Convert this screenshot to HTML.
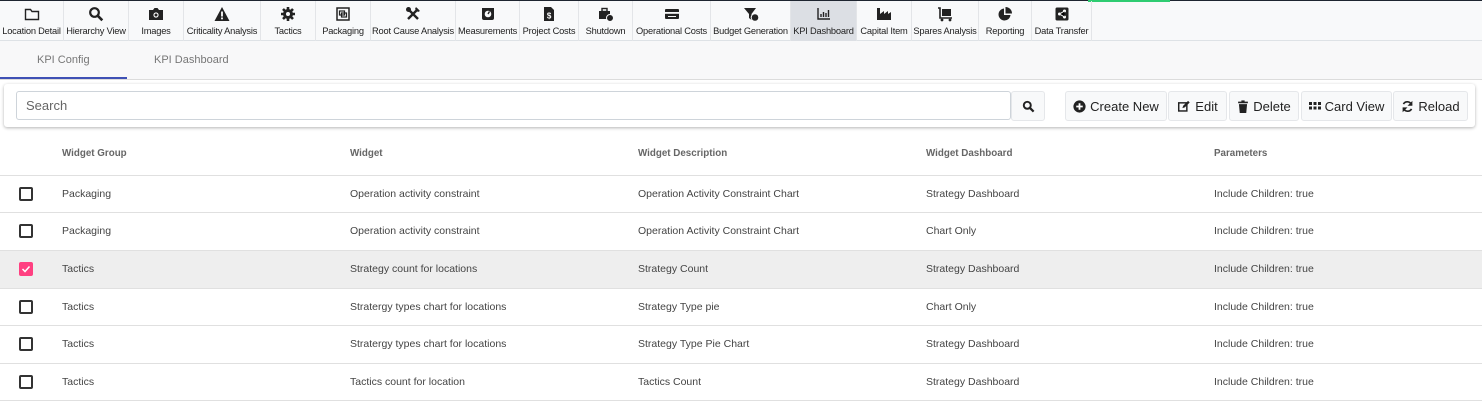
<!DOCTYPE html><html><head><style>
*{box-sizing:border-box;margin:0;padding:0}
body{width:1482px;height:410px;background:#fff;font-family:"Liberation Sans",sans-serif;position:relative;overflow:hidden;color:#333}
.top{position:absolute;left:0;top:0;width:1482px;height:41px;background:#f8f9fa;border-top:1px solid #1e2530;border-bottom:1px solid #dee2e6}
.green{position:absolute;left:1088px;top:-1px;width:82px;height:2px;background:#2ecc71}
.it{position:absolute;top:0;height:40px;border-right:1px solid #e3e5e8;text-align:center;font-size:9.3px;color:#222;letter-spacing:-0.2px}
.it span{position:absolute;left:0;right:0;top:25px;white-space:nowrap}
.it svg{position:absolute;left:50%;top:5px;margin-left:-8px}
.act{background:#dcdfe4}
.tabs{position:absolute;top:41px;left:0;width:1482px;height:39px;background:#f8f8f9;border-bottom:1px solid #dcdcdc}
.tab{position:absolute;top:13px;font-size:11px;color:#777}
.ul{position:absolute;left:0;top:36px;width:127px;height:2px;background:#3f51b5}
.panel{position:absolute;left:4px;top:84px;width:1471px;height:43px;background:#fff;border-radius:3px;box-shadow:0 1px 3px rgba(0,0,0,.3)}
.search{position:absolute;left:16px;top:91px;width:995px;height:29px;border:1px solid #ced4da;border-radius:3px;font-size:13px;color:#666;padding:6px 9px}
.btn{position:absolute;top:91px;height:30px;background:#f8f9fa;border:1px solid #e5e7ea;border-radius:3px;font-size:13px;color:#222;display:flex;align-items:center;justify-content:center;gap:4px}
.hdr{position:absolute;top:148px;font-size:9.8px;color:#666;font-weight:bold}
.row{position:absolute;left:0;width:1482px;height:38px;border-top:1px solid #e0e0e0;font-size:10.5px;color:#444}
.row div{position:absolute;top:12px}
.cb{position:absolute;left:19px;top:11px;width:14px;height:14px;border:2px solid #333;border-radius:2px}
.sel{background:#eeeeee}
</style></head><body>
<div class="top"><div class="green"></div>
<div class="it" style="left:0;width:64px"><svg width="16" height="16" viewBox="0 0 16 16"><path d="M1.5 3.5h5l1.5 2h6.5v8h-13z" fill="none" stroke="#222" stroke-width="1.4"/></svg><span>Location Detail</span></div>
<div class="it" style="left:64px;width:65px"><svg width="16" height="16" viewBox="0 0 16 16"><circle cx="6.5" cy="6.5" r="4.3" fill="none" stroke="#222" stroke-width="2.2"/><path d="M9.8 9.8l4.5 4.5" stroke="#222" stroke-width="2.6"/></svg><span>Hierarchy View</span></div>
<div class="it" style="left:129px;width:55px"><svg width="16" height="16" viewBox="0 0 16 16"><path d="M1 4h4l1.5-2h3L11 4h4v10H1z" fill="#222"/><circle cx="8" cy="9" r="2.6" fill="#fff"/><circle cx="8" cy="9" r="1.5" fill="#222"/></svg><span>Images</span></div>
<div class="it" style="left:184px;width:77px"><svg width="16" height="16" viewBox="0 0 16 16"><path d="M8 1L15.5 15H.5z" fill="#222"/><rect x="7.1" y="5.5" width="1.8" height="5" fill="#fff"/><rect x="7.1" y="11.5" width="1.8" height="1.8" fill="#fff"/></svg><span>Criticality Analysis</span></div>
<div class="it" style="left:261px;width:55px"><svg width="16" height="16" viewBox="0 0 16 16"><circle cx="8" cy="8" r="5" fill="#222"/><path d="M8 1v14M1 8h14M3 3l10 10M13 3L3 13" stroke="#222" stroke-width="2.6"/><circle cx="8" cy="8" r="2" fill="#f8f9fa"/></svg><span>Tactics</span></div>
<div class="it" style="left:316px;width:55px"><svg width="16" height="16" viewBox="0 0 16 16"><rect x="2" y="2" width="12" height="12" fill="none" stroke="#222" stroke-width="1.5"/><rect x="4.5" y="5" width="5" height="4" fill="none" stroke="#222" stroke-width="1.2"/><rect x="6.5" y="7" width="5" height="4" fill="none" stroke="#222" stroke-width="1.2"/></svg><span>Packaging</span></div>
<div class="it" style="left:371px;width:85px"><svg width="16" height="16" viewBox="0 0 16 16"><path d="M3 13L13 3" stroke="#222" stroke-width="2.4"/><circle cx="3.5" cy="3.5" r="2.5" fill="#222"/><path d="M4 4l9 9" stroke="#222" stroke-width="2.4"/><path d="M11 1l4 4-2 1-3-3z" fill="#222"/></svg><span>Root Cause Analysis</span></div>
<div class="it" style="left:456px;width:64px"><svg width="16" height="16" viewBox="0 0 16 16"><path d="M2 2h12v10a2 2 0 0 1-2 2H4a2 2 0 0 1-2-2z" fill="#222"/><circle cx="8" cy="8" r="3.3" fill="#f8f9fa"/><path d="M8 8l1.5-2.5" stroke="#222" stroke-width="1.4"/></svg><span>Measurements</span></div>
<div class="it" style="left:520px;width:59px"><svg width="16" height="16" viewBox="0 0 16 16"><path d="M3 1h7l3 3v11H3z" fill="#222"/><text x="8" y="12.5" font-size="8" fill="#fff" text-anchor="middle" font-family="Liberation Sans" font-weight="bold">$</text></svg><span>Project Costs</span></div>
<div class="it" style="left:579px;width:54px"><svg width="16" height="16" viewBox="0 0 16 16"><rect x="1" y="5" width="11" height="8" fill="#222"/><rect x="4" y="2.5" width="5" height="3" fill="none" stroke="#222" stroke-width="1.4"/><circle cx="12" cy="12" r="3.5" fill="#222" stroke="#f8f9fa"/></svg><span>Shutdown</span></div>
<div class="it" style="left:633px;width:78px"><svg width="16" height="16" viewBox="0 0 16 16"><rect x="1" y="3" width="14" height="10" rx="1" fill="#222"/><rect x="1" y="6" width="14" height="1.8" fill="#f8f9fa"/><rect x="4" y="10" width="8" height="1" fill="#f8f9fa"/></svg><span>Operational Costs</span></div>
<div class="it" style="left:711px;width:80px"><svg width="16" height="16" viewBox="0 0 16 16"><path d="M1 2h12L8.5 8v6L6 12V8z" fill="#222"/><circle cx="12" cy="11.5" r="3.8" fill="#222" stroke="#f8f9fa"/></svg><span>Budget Generation</span></div>
<div class="it act" style="left:791px;width:66px"><svg width="16" height="16" viewBox="0 0 16 16"><path d="M2 2v11h12" fill="none" stroke="#222" stroke-width="1.4"/><path d="M5 11V8M7.5 11V6M10 11V7M12.5 11V4" stroke="#222" stroke-width="1.4"/></svg><span>KPI Dashboard</span></div>
<div class="it" style="left:857px;width:55px"><svg width="16" height="16" viewBox="0 0 16 16"><path d="M1 2h3v6l4-3v3l4-3v3l3-2v8H1z" fill="#222"/></svg><span>Capital Item</span></div>
<div class="it" style="left:912px;width:67px"><svg width="16" height="16" viewBox="0 0 16 16"><path d="M1 2h2v10h12" fill="none" stroke="#222" stroke-width="1.6"/><rect x="5" y="3" width="9" height="7" fill="#222"/><circle cx="5" cy="14" r="1.4" fill="#222"/><circle cx="13" cy="14" r="1.4" fill="#222"/></svg><span>Spares Analysis</span></div>
<div class="it" style="left:979px;width:53px"><svg width="16" height="16" viewBox="0 0 16 16"><path d="M7 2.5A6 6 0 1 0 13.5 9H7z" fill="#222"/><path d="M8.5 1v6.5H15A6.5 6.5 0 0 0 8.5 1z" fill="#222"/></svg><span>Reporting</span></div>
<div class="it" style="left:1032px;width:60px"><svg width="16" height="16" viewBox="0 0 16 16"><rect x="1.5" y="1.5" width="13" height="13" rx="1.5" fill="#222"/><circle cx="10.5" cy="5" r="1.5" fill="#fff"/><circle cx="5.5" cy="8" r="1.5" fill="#fff"/><circle cx="10.5" cy="11" r="1.5" fill="#fff"/><path d="M10.5 5L5.5 8l5 3" stroke="#fff" stroke-width="1"/></svg><span>Data Transfer</span></div>
</div>
<div class="tabs"><div class="tab" style="left:37px">KPI Config</div><div class="tab" style="left:154px">KPI Dashboard</div><div class="ul"></div></div>
<div class="panel"></div>
<div class="search">Search</div>
<div class="btn" style="left:1011px;width:34px"><svg width="13" height="13" viewBox="0 0 16 16"><circle cx="6.5" cy="6.5" r="4.3" fill="none" stroke="#222" stroke-width="2.4"/><path d="M9.8 9.8l4.5 4.5" stroke="#222" stroke-width="2.8"/></svg></div>
<div class="btn" style="left:1065px;width:102px"><svg width="13" height="13" viewBox="0 0 16 16"><circle cx="8" cy="8" r="7.5" fill="#222"/><path d="M8 4v8M4 8h8" stroke="#fff" stroke-width="2.2"/></svg>Create New</div>
<div class="btn" style="left:1168px;width:59px"><svg width="14" height="13" viewBox="0 0 16 16"><rect x="1.5" y="3.5" width="10" height="10" fill="none" stroke="#222" stroke-width="1.8"/><path d="M6 10l1-3 6-6 2 2-6 6z" fill="#222"/></svg>Edit</div>
<div class="btn" style="left:1229px;width:70px"><svg width="12" height="13" viewBox="0 0 14 16"><rect x="1" y="2" width="12" height="2" fill="#222"/><rect x="5" y="0.5" width="4" height="2" fill="#222"/><path d="M2 5h10l-1 11H3z" fill="#222"/></svg>Delete</div>
<div class="btn" style="left:1301px;width:91px"><svg width="12" height="10" viewBox="0 0 12 10"><g fill="#222"><rect x="0" y="1" width="3" height="3"/><rect x="4.5" y="1" width="3" height="3"/><rect x="9" y="1" width="3" height="3"/><rect x="0" y="5.5" width="3" height="3"/><rect x="4.5" y="5.5" width="3" height="3"/><rect x="9" y="5.5" width="3" height="3"/></g></svg>Card View</div>
<div class="btn" style="left:1393px;width:75px"><svg width="13" height="13" viewBox="0 0 16 16"><path d="M13 6A5.5 5.5 0 0 0 3 5M3 10a5.5 5.5 0 0 0 10 1" fill="none" stroke="#222" stroke-width="2"/><path d="M14 1v6H8zM2 15V9h6z" fill="#222"/></svg>Reload</div>
<div class="hdr" style="left:62px">Widget Group</div><div class="hdr" style="left:350px">Widget</div><div class="hdr" style="left:638px">Widget Description</div><div class="hdr" style="left:926px">Widget Dashboard</div><div class="hdr" style="left:1214px">Parameters</div>
<div class="row" style="top:175px"><span class="cb"></span><div style="left:62px">Packaging</div><div style="left:350px">Operation activity constraint</div><div style="left:638px">Operation Activity Constraint Chart</div><div style="left:926px">Strategy Dashboard</div><div style="left:1214px">Include Children: true</div></div>
<div class="row" style="top:212px"><span class="cb"></span><div style="left:62px">Packaging</div><div style="left:350px">Operation activity constraint</div><div style="left:638px">Operation Activity Constraint Chart</div><div style="left:926px">Chart Only</div><div style="left:1214px">Include Children: true</div></div>
<div class="row sel" style="top:250px"><span class="cb" style="background:#ff4081;border-color:#ff4081"><svg width="10" height="10" viewBox="0 0 10 10" style="position:absolute;left:0;top:0"><path d="M1.5 5l2.5 2.5 4.5-5" fill="none" stroke="#fff" stroke-width="1.5"/></svg></span><div style="left:62px">Tactics</div><div style="left:350px">Strategy count for locations</div><div style="left:638px">Strategy Count</div><div style="left:926px">Strategy Dashboard</div><div style="left:1214px">Include Children: true</div></div>
<div class="row" style="top:288px"><span class="cb"></span><div style="left:62px">Tactics</div><div style="left:350px">Stratergy types chart for locations</div><div style="left:638px">Strategy Type pie</div><div style="left:926px">Chart Only</div><div style="left:1214px">Include Children: true</div></div>
<div class="row" style="top:325px"><span class="cb"></span><div style="left:62px">Tactics</div><div style="left:350px">Stratergy types chart for locations</div><div style="left:638px">Strategy Type Pie Chart</div><div style="left:926px">Strategy Dashboard</div><div style="left:1214px">Include Children: true</div></div>
<div class="row" style="top:363px;border-bottom:1px solid #e0e0e0"><span class="cb"></span><div style="left:62px">Tactics</div><div style="left:350px">Tactics count for location</div><div style="left:638px">Tactics Count</div><div style="left:926px">Strategy Dashboard</div><div style="left:1214px">Include Children: true</div></div>
</body></html>
